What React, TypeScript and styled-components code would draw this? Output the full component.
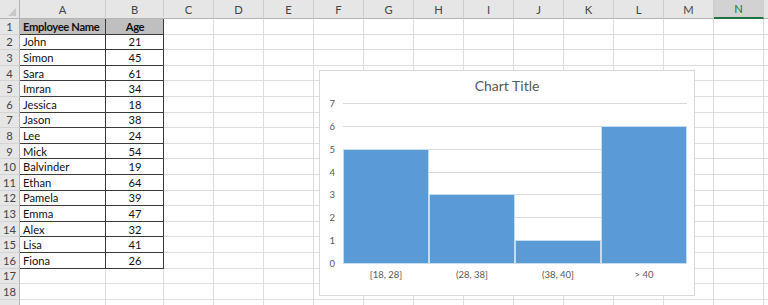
import React from "react";
import styled, { createGlobalStyle, css } from "styled-components";

const Global = createGlobalStyle`
  html, body { margin: 0; padding: 0; background: #ffffff; }
  body { width: 768px; height: 305px; overflow: hidden; font-family: Lato, "Liberation Sans", sans-serif; }
`;

const COLS = ["A", "B", "C", "D", "E", "F", "G", "H", "I", "J", "K", "L", "M", "N", "O"];
const SELECTED = "N";
const ROW_COUNT = 19;
const VISIBLE_ROW_LABELS = 18;

const data: [string, number][] = [
  ["John", 21],
  ["Simon", 45],
  ["Sara", 61],
  ["Imran", 34],
  ["Jessica", 18],
  ["Jason", 38],
  ["Lee", 24],
  ["Mick", 54],
  ["Balvinder", 19],
  ["Ethan", 64],
  ["Pamela", 39],
  ["Emma", 47],
  ["Alex", 32],
  ["Lisa", 41],
  ["Fiona", 26],
];

const Page = styled.div`
  position: relative;
  width: 768px;
  height: 305px;
  overflow: hidden;
`;

const Sheet = styled.div`
  display: grid;
  grid-template-columns: 20px 86px 58px repeat(12, 50px) 1fr;
  grid-template-rows: 19px repeat(${ROW_COUNT}, 15.6px);
  width: 768px;
`;

const Corner = styled.div`
  box-sizing: border-box;
  background: #e6e6e6;
  border-right: 1px solid #b4b4b4;
  border-bottom: 1px solid #b4b4b4;
  display: flex;
  justify-content: flex-end;
  align-items: flex-end;
  padding: 0 3px 2px 0;
`;

const CornerMark = styled.div`
  width: 8px;
  height: 8px;
  background: #c8c8c8;
  clip-path: polygon(100% 0, 100% 100%, 0 100%);
`;

const ColHead = styled.div<{ $selected?: boolean }>`
  box-sizing: border-box;
  background: #e6e6e6;
  border-right: 1px solid #cdcdcd;
  border-bottom: 1px solid #b4b4b4;
  display: flex;
  align-items: center;
  justify-content: center;
  font-size: 11.2px;
  color: #444444;
  ${(p) =>
    p.$selected &&
    css`
      background: #d2d2d2;
      color: #217346;
      border-bottom: 2px solid #217346;
    `}
`;

const RowHead = styled.div`
  box-sizing: border-box;
  background: #e6e6e6;
  border-right: 1px solid #b4b4b4;
  border-bottom: 1px solid #d4d4d4;
  display: flex;
  align-items: center;
  justify-content: center;
  font-size: 11.2px;
  color: #444444;
`;

const Cell = styled.div<{ $boxed?: boolean; $head?: boolean; $center?: boolean }>`
  box-sizing: border-box;
  border-right: 1px solid #dedede;
  border-bottom: 1px solid #dedede;
  display: flex;
  align-items: center;
  justify-content: ${(p) => (p.$center ? "center" : "flex-start")};
  padding: 0 2px 0 3px;
  font-size: 11.2px;
  color: #111111;
  white-space: nowrap;
  overflow: hidden;
  ${(p) =>
    p.$boxed &&
    css`
      border-right-color: #3a3a3a;
      border-bottom-color: #3a3a3a;
    `}
  ${(p) =>
    p.$head &&
    css`
      background: #bfbfbf;
      font-weight: 700;
      letter-spacing: -0.35px;
    `}
`;

const ChartBox = styled.div`
  position: absolute;
  left: 319px;
  top: 70px;
  width: 376px;
  height: 226px;
  box-sizing: border-box;
  background: #ffffff;
  border: 1px solid #d9d9d9;
  display: flex;
  flex-direction: column;
`;

const ChartTitle = styled.div`
  height: 22px;
  line-height: 22px;
  margin-top: 4px;
  text-align: center;
  font-size: 14px;
  color: #595959;
`;

const Plot = styled.svg`
  display: block;
  overflow: visible;
  font-family: Lato, "Liberation Sans", sans-serif;
`;

const bins = [
  { label: "[18, 28]", value: 5 },
  { label: "(28, 38]", value: 3 },
  { label: "(38, 40]", value: 1 },
  { label: "> 40", value: 6 },
];

function Chart() {
  const x0 = 23;
  const x1 = 367;
  const yBase = 166;
  const step = 160 / 7;
  const barW = (x1 - x0) / bins.length;
  const ticks = [0, 1, 2, 3, 4, 5, 6, 7];
  return (
    <ChartBox>
      <ChartTitle>Chart Title</ChartTitle>
      <Plot width={374} height={198} viewBox="0 0 374 198">
        {ticks.map((t) => {
          const y = Math.round(yBase - t * step) + 0.5;
          return (
            <g key={t}>
              <line x1={x0} x2={x1} y1={y} y2={y} stroke="#d9d9d9" strokeWidth={1} />
              <text x={15} y={y + 3.2} textAnchor="end" fontSize={9.5} fill="#595959">
                {t}
              </text>
            </g>
          );
        })}
        {bins.map((b, i) => {
          const top = Math.round(yBase - b.value * step);
          const left = x0 + i * barW;
          return (
            <g key={b.label}>
              <rect
                x={left + 0.5}
                y={top + 0.5}
                width={barW - 1}
                height={yBase - top}
                fill="#5b9bd5"
                stroke="#c5dcf1"
                strokeWidth={1}
              />
              <text x={left + barW / 2} y={181} textAnchor="middle" fontSize={9.5} fill="#595959">
                {b.label}
              </text>
            </g>
          );
        })}
      </Plot>
    </ChartBox>
  );
}

export default function App() {
  const cells: React.ReactNode[] = [];
  cells.push(
    <Corner key="corner">
      <CornerMark />
    </Corner>
  );
  COLS.forEach((c) =>
    cells.push(
      <ColHead key={`h${c}`} $selected={c === SELECTED}>
        {c === "O" ? "" : c}
      </ColHead>
    )
  );
  for (let r = 1; r <= ROW_COUNT; r++) {
    cells.push(<RowHead key={`r${r}`}>{r <= VISIBLE_ROW_LABELS ? r : ""}</RowHead>);
    COLS.forEach((c, ci) => {
      const inTable = ci < 2 && r <= 16;
      let content: React.ReactNode = null;
      if (inTable) {
        if (r === 1) content = ci === 0 ? "Employee Name" : "Age";
        else content = ci === 0 ? data[r - 2][0] : data[r - 2][1];
      }
      cells.push(
        <Cell key={`${c}${r}`} $boxed={inTable} $head={inTable && r === 1} $center={ci === 1}>
          {content}
        </Cell>
      );
    });
  }
  return (
    <>
      <Global />
      <Page>
        <Sheet>{cells}</Sheet>
        <Chart />
      </Page>
    </>
  );
}
